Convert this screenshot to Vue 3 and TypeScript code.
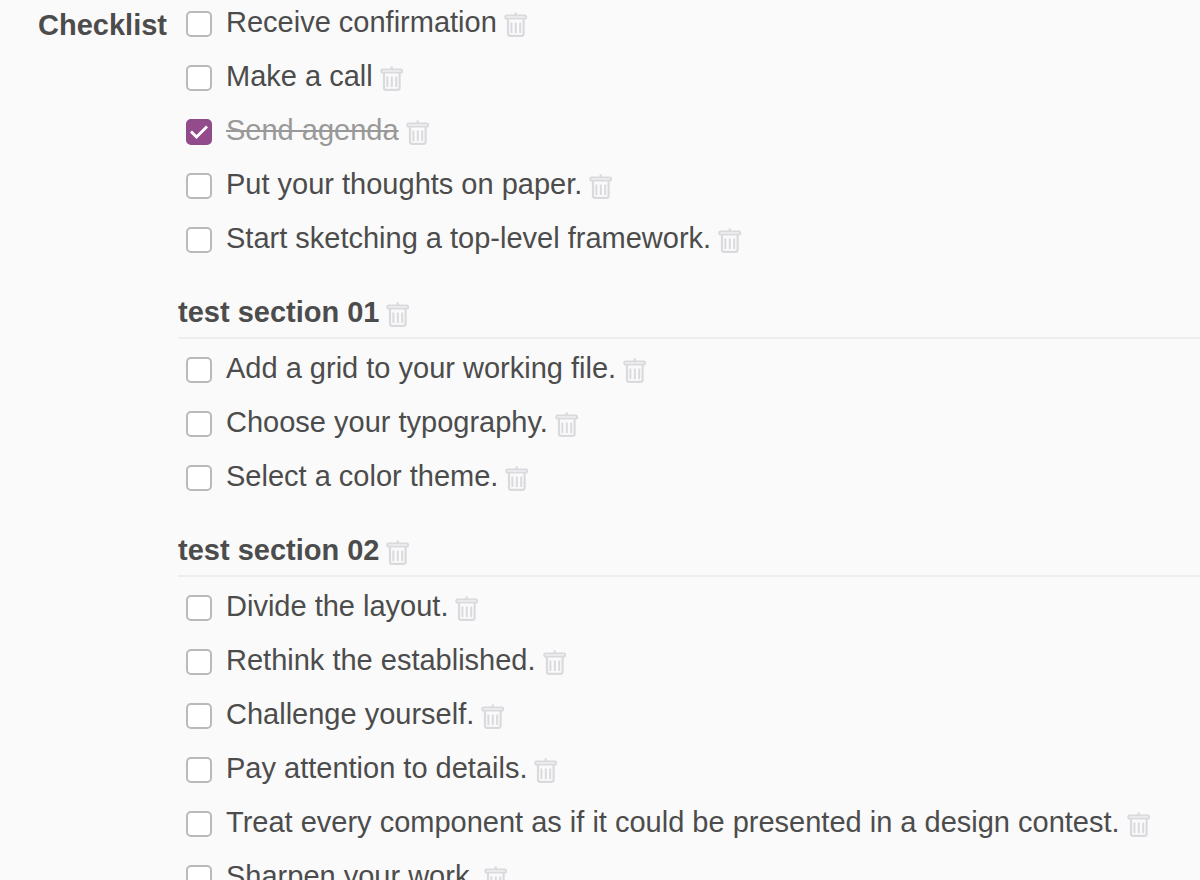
<script setup lang="ts">
import { reactive } from 'vue'

interface Item {
  id: string
  text: string
  done: boolean
}
interface Section {
  title: string
  items: Item[]
}

const make = (prefix: string, texts: string[], done: number[] = []): Item[] =>
  texts.map((text, i) => ({ id: `${prefix}-${i}`, text, done: done.includes(i) }))

const sections = reactive<Section[]>([
  {
    title: '',
    items: make(
      'general',
      [
        'Receive confirmation',
        'Make a call',
        'Send agenda',
        'Put your thoughts on paper.',
        'Start sketching a top-level framework.',
      ],
      [2],
    ),
  },
  {
    title: 'test section 01',
    items: make('s1', [
      'Add a grid to your working file.',
      'Choose your typography.',
      'Select a color theme.',
    ]),
  },
  {
    title: 'test section 02',
    items: make('s2', [
      'Divide the layout.',
      'Rethink the established.',
      'Challenge yourself.',
      'Pay attention to details.',
      'Treat every component as if it could be presented in a design contest.',
      'Sharpen your work.',
    ]),
  },
])

function removeItem(section: Section, index: number) {
  section.items.splice(index, 1)
}
function removeSection(index: number) {
  sections.splice(index, 1)
}
</script>

<template>
  <svg class="defs" aria-hidden="true">
    <symbol id="trash" viewBox="0 0 24 26">
      <g fill="none" stroke="currentColor" stroke-linejoin="round">
        <path d="M11.7 0.4V3.5" stroke-width="2.2" />
        <rect x="1.3" y="3.6" width="20.8" height="3" rx="1.2" stroke-width="2" />
        <path d="M4 7V21.8Q4 23.9 6.2 23.9H17.4Q19.6 23.9 19.6 21.8V7" stroke-width="2.2" />
        <path d="M7.4 10.4V21M11.8 10.4V21M16.2 10.4V21" stroke-width="2" />
      </g>
    </symbol>
  </svg>
  <main class="field">
    <h2 class="label">Checklist</h2>
    <div class="content">
      <section v-for="(section, s) in sections" :key="s" class="section">
        <header v-if="section.title" class="head">
          <h3 class="title">{{ section.title }}</h3>
          <button class="remove" type="button" :aria-label="`Delete ${section.title}`" @click="removeSection(s)">
            <svg class="icon"><use href="#trash" /></svg>
          </button>
        </header>
        <ul class="list">
          <li v-for="(item, i) in section.items" :key="item.id" class="item">
            <input :id="item.id" v-model="item.done" class="box" type="checkbox" />
            <label :for="item.id" class="text" :class="{ done: item.done }">{{ item.text }}</label>
            <button class="remove" type="button" :aria-label="`Delete ${item.text}`" @click="removeItem(section, i)">
              <svg class="icon"><use href="#trash" /></svg>
            </button>
          </li>
        </ul>
      </section>
    </div>
  </main>
</template>

<style>
body {
  background: #fafafa;
  overflow-x: hidden;
}
</style>

<style scoped>
.defs {
  position: absolute;
  width: 0;
  height: 0;
}
.field {
  display: flex;
  align-items: flex-start;
  font-family: 'Liberation Sans', Arial, sans-serif;
  font-size: 29px;
  line-height: 44px;
  color: #4c4c4c;
}
.label {
  flex: none;
  box-sizing: border-box;
  width: 178px;
  margin: 0;
  padding: 3px 11px 0 0;
  text-align: right;
  font-size: 29px;
  font-weight: bold;
}
.content {
  flex: 1;
  min-width: 0;
}
.section + .section {
  margin-top: 20px;
}
.head {
  display: flex;
  align-items: flex-start;
  margin-bottom: 7px;
  padding-bottom: 3px;
  border-bottom: 2px solid #eeeeee;
}
.title {
  margin: 0;
  font-size: 29px;
  font-weight: bold;
}
.list {
  margin: 0;
  padding: 0;
  list-style: none;
}
.item {
  display: flex;
  align-items: flex-start;
  padding: 0 0 10px 8px;
}
.box {
  appearance: none;
  flex: none;
  width: 26px;
  height: 26px;
  margin: 11px 14px 0 0;
  border: 2px solid #bababa;
  border-radius: 5px;
  background: #ffffff;
}
.box:checked {
  border-color: #8f4a89;
  background: #924c8b
    url("data:image/svg+xml,%3Csvg xmlns='http://www.w3.org/2000/svg' viewBox='0 0 22 22'%3E%3Cpath d='M3 10.5L8.5 16L19 5.5' fill='none' stroke='white' stroke-width='2.8'/%3E%3C/svg%3E")
    center / 22px 22px no-repeat;
}
.done {
  color: #999999;
  text-decoration: line-through;
  text-decoration-thickness: 2px;
}
.remove {
  flex: none;
  margin: 12px 0 0 7px;
  padding: 0;
  border: 0;
  background: none;
  color: #dadade;
  cursor: pointer;
}
.icon {
  display: block;
  width: 24px;
  height: 26px;
}
</style>
